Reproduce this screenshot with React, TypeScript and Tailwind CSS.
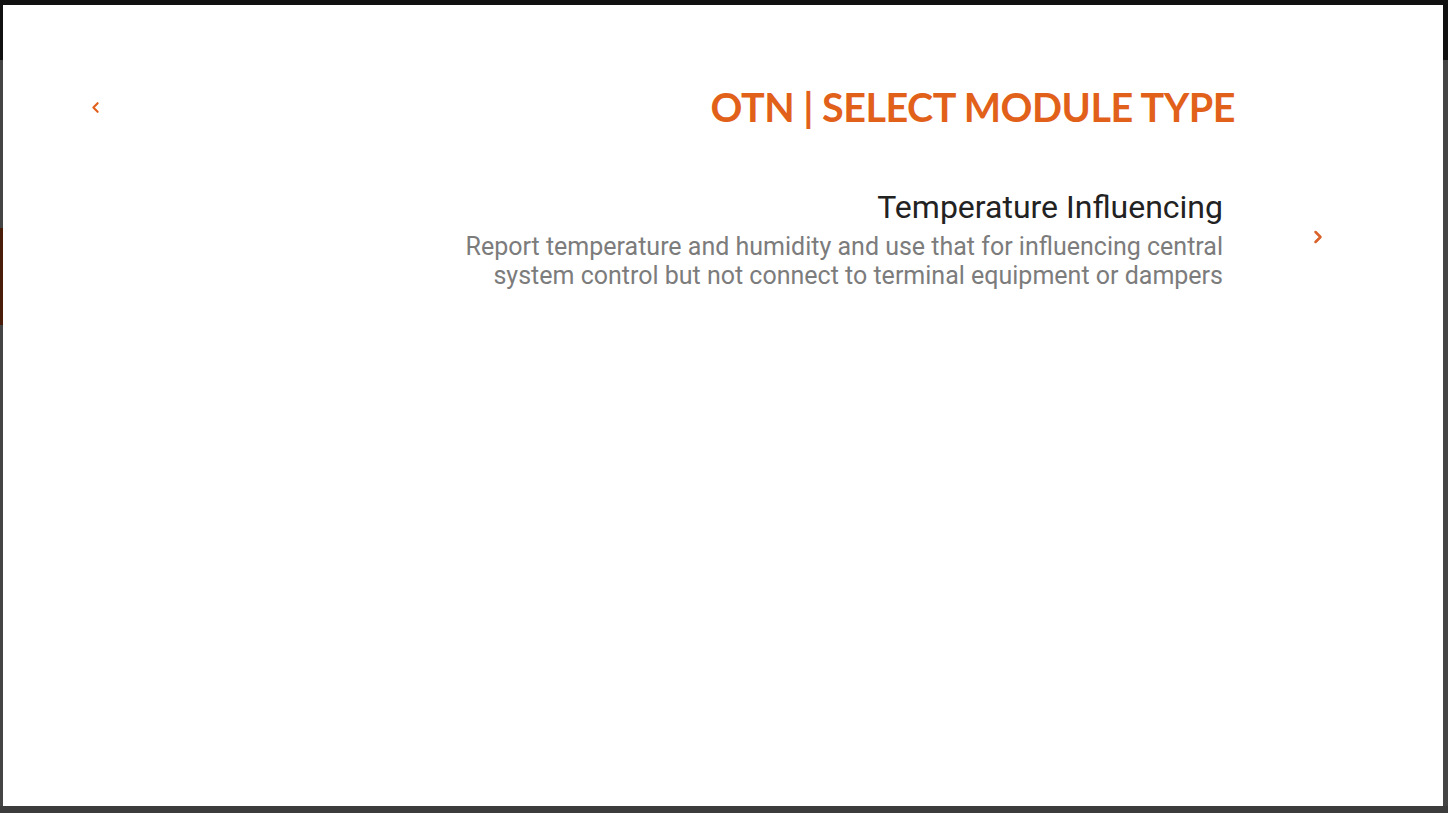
import React from 'react';
import { ChevronLeft, ChevronRight } from 'lucide-react';

const ModuleOption: React.FC<{ title: string; description: string }> = ({ title, description }) => (
  <div className="flex items-center justify-end pr-[115px]">
    <div className="text-right font-['Roboto',sans-serif]">
      <div className="text-[32px] leading-[38px] text-[#222222]">{title}</div>
      <div className="mt-[6px] text-[25px] leading-[29px] text-[#7c7c7c] max-w-[800px] ml-auto">{description}</div>
    </div>
    <ChevronRight className="ml-[85px] mb-[4px] shrink-0 text-[#d8622a]" size={20} strokeWidth={3} />
  </div>
);

export default function App() {
  return (
    <div className="w-[1448px] h-[813px] flex flex-col bg-[#3c3c3c] overflow-hidden">
      {/* top bar */}
      <div className="h-[5px] bg-[#111111] shrink-0" />
      <div className="flex flex-1 min-h-0">
        {/* left edge */}
        <div className="w-[3px] flex flex-col shrink-0">
          <div className="h-[55px] bg-[#111111]" />
          <div className="h-[168px] bg-[#444444]" />
          <div className="h-[97px] bg-[#4a1c0a]" />
          <div className="flex-1 bg-[#444444]" />
        </div>

        {/* screen */}
        <div className="flex-1 bg-white flex flex-col">
          <div className="h-[50px] mt-[77px] flex items-center justify-between pl-[84px] pr-[208px]">
            <ChevronLeft className="text-[#e0601c]" size={17} strokeWidth={3} />
            <h1 className="font-['Lato',sans-serif] font-bold text-[39.5px] leading-none text-[#e2611a] tracking-[-0.5px]">
              OTN | SELECT MODULE TYPE
            </h1>
          </div>

          <div className="mt-[56px]">
            <ModuleOption
              title="Temperature Influencing"
              description="Report temperature and humidity and use that for influencing central system control but not connect to terminal equipment or dampers"
            />
          </div>
        </div>

        {/* right edge */}
        <div className="w-[5px] flex flex-col shrink-0">
          <div className="h-[55px] bg-[#111111]" />
          <div className="flex-1 bg-[#444444]" />
        </div>
      </div>
      {/* bottom bar */}
      <div className="h-[7px] bg-[#3c3c3c] shrink-0" />
    </div>
  );
}
